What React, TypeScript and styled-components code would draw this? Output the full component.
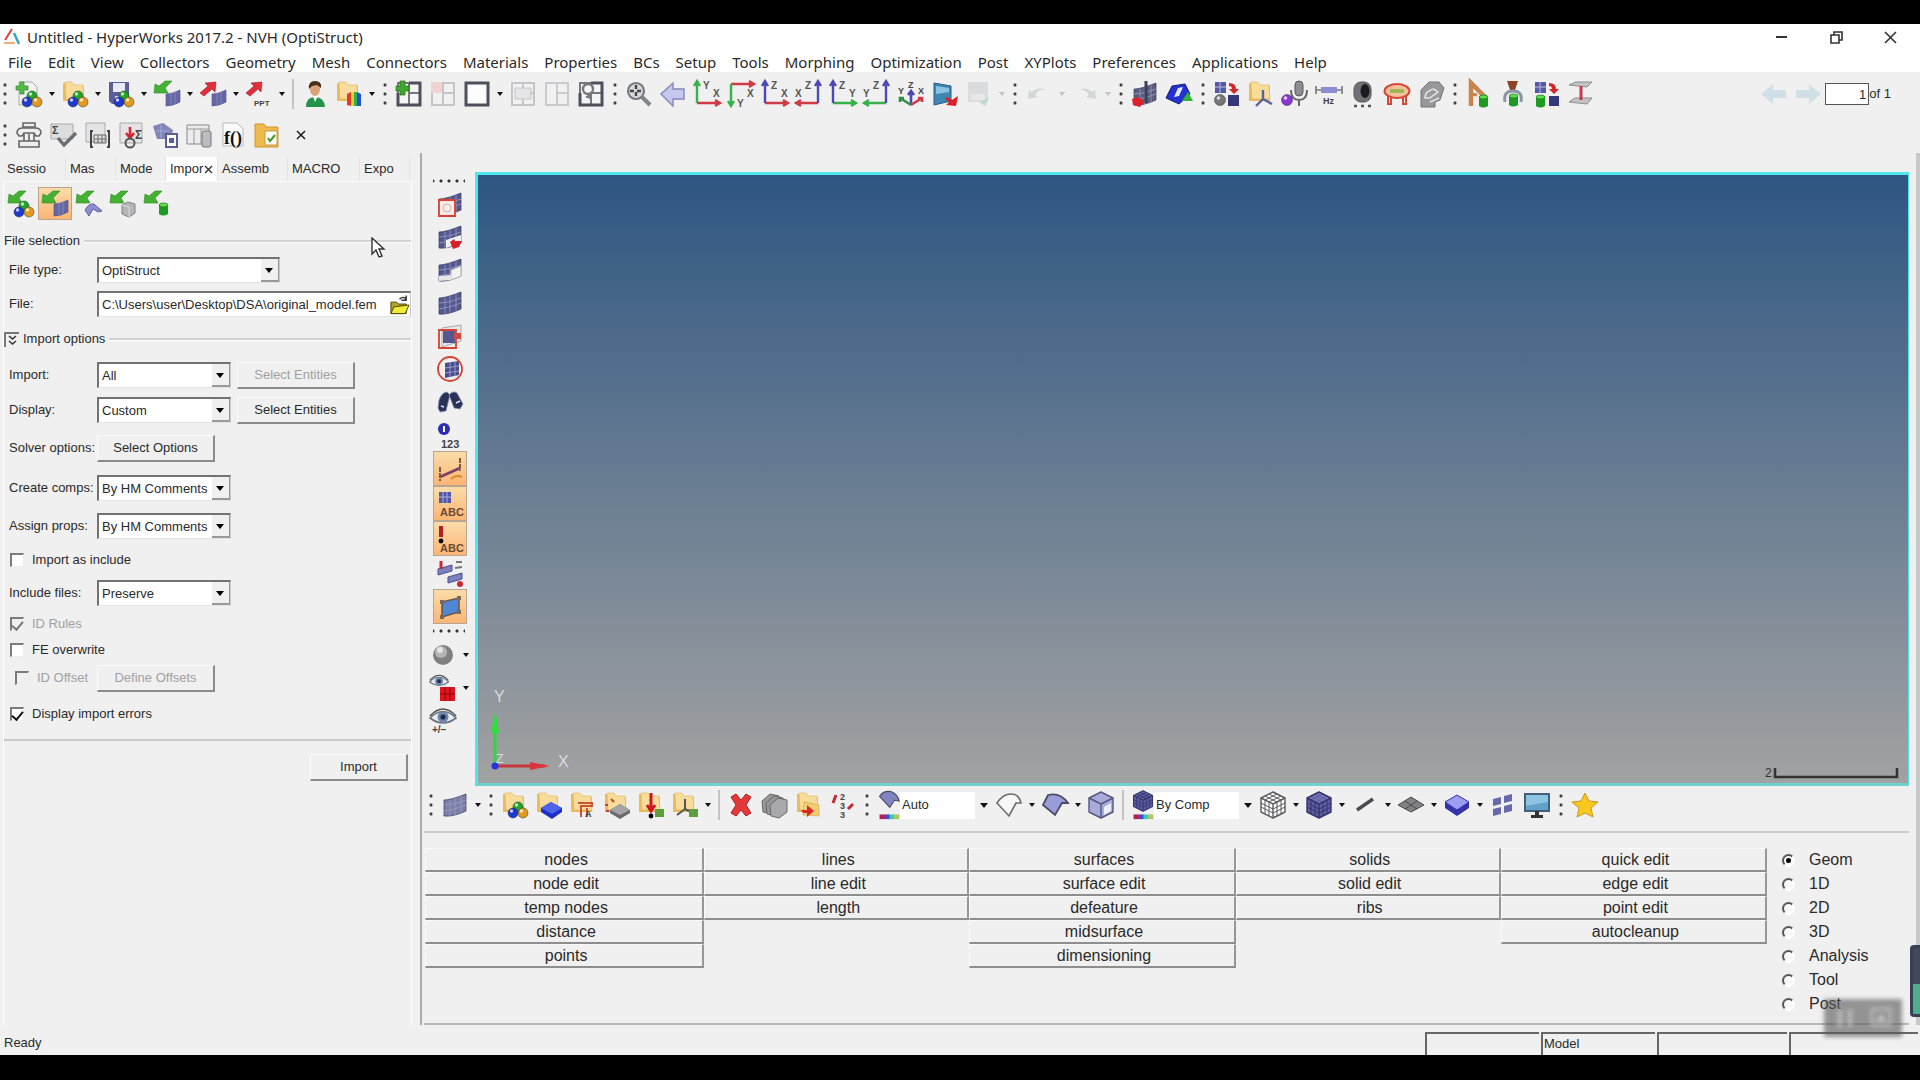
import React, { ReactNode } from "react";
import styled, { createGlobalStyle, css } from "styled-components";

const face = "#f0f0f0";
const sans = '"Liberation Sans", Arial, sans-serif';
const menuFont = '"Noto Sans", "Open Sans", sans-serif';

const GlobalStyle = createGlobalStyle`
  * { box-sizing: border-box; }
  body { margin: 0; background: #000; }
  button, input, select { font: inherit; color: inherit; margin: 0; padding: 0; border-radius: 0; }
`;

/* ---------- frame ---------- */

const Screen = styled.div`
  height: 100vh;
  min-height: 900px;
  padding: 24px 0 25px;
  background: #000;
  font: 13px/16px ${sans};
  color: #2a2a2a;
`;

const Window = styled.div`
  position: relative;
  display: flex;
  flex-direction: column;
  height: 100%;
  background: ${face};
  overflow: hidden;
`;

const TitleBar = styled.header`
  display: flex;
  align-items: center;
  gap: 6px;
  height: 26px;
  padding: 0 22px 0 3px;
  background: #fff;
  font: 15px/20px ${menuFont};
`;

const TitleText = styled.h1`
  flex: 1;
  margin: 0;
  font: inherit;
`;

const WindowButtons = styled.div`
  display: flex;
  gap: 38px;
`;

const PlainButton = styled.button<{ $width?: number }>`
  display: flex;
  align-items: center;
  justify-content: center;
  flex: none;
  width: ${(p) => p.$width ?? 16}px;
  height: 20px;
  border: 0;
  background: none;
`;

const MenuBar = styled.nav`
  display: flex;
  gap: 16px;
  height: 22px;
  padding: 0 8px;
  background: #fff;
  font: 15px/24px ${menuFont};
`;

const MenuLink = styled.a`
  color: #2a2a2a;
  text-decoration: none;
  white-space: nowrap;
`;

/* ---------- toolbars ---------- */

const Bar = styled.div<{ $height: number }>`
  display: flex;
  align-items: center;
  height: ${(p) => p.$height}px;
  flex: none;
`;

const TopBar = styled(Bar)`
  margin-left: -2px;
`;

const ViewBar = styled(Bar)`
  padding-bottom: 7px;
`;

const ToolBtn = styled.button<{ $active?: boolean }>`
  display: flex;
  align-items: center;
  justify-content: center;
  flex: none;
  width: 34px;
  height: 33px;
  border: 0;
  background: none;
  svg {
    overflow: visible;
  }
  ${(p) =>
    p.$active &&
    css`
      background: linear-gradient(#fadca9, #fcb575);
      border: 1px solid #b9a58f;
    `}
`;

const DropBtn = styled.button<{ $faint?: boolean }>`
  display: flex;
  align-items: center;
  justify-content: center;
  flex: none;
  width: 12px;
  height: 32px;
  border: 0;
  background: none;
  &::after {
    content: "";
    border: 3px solid transparent;
    border-top: 4px solid ${(p) => (p.$faint ? "#c4c4c4" : "#111")};
    border-bottom: 0;
  }
`;

const Grip = styled.span<{ $across?: boolean }>`
  flex: none;
  width: ${(p) => (p.$across ? 32 : 14)}px;
  height: ${(p) => (p.$across ? 14 : 30)}px;
  background-image: radial-gradient(circle at center, #333 0 1px, transparent 2px);
  background-size: ${(p) => (p.$across ? "8px 14px" : "14px 9px")};
  background-position: center;
  background-repeat: ${(p) => (p.$across ? "repeat-x" : "repeat-y")};
`;

const Divider = styled.span`
  flex: none;
  width: 10px;
  height: 30px;
  background: linear-gradient(#c4c4c4, #c4c4c4) center / 2px 100% no-repeat;
`;

const Pager = styled.form`
  display: flex;
  align-items: center;
  margin-left: auto;
  padding-right: 29px;
`;

const PageBox = styled.input`
  width: 44px;
  height: 22px;
  padding: 0 2px;
  border: 1px solid #555;
  background: #fff;
  text-align: right;
`;

/* ---------- body ---------- */

const Body = styled.div`
  display: flex;
  flex: 1;
  min-height: 0;
`;

const Side = styled.aside`
  display: flex;
  flex-direction: column;
  width: 424px;
  flex: none;
  padding: 4px 10px 0 3px;
  border-right: 2px solid ${face};
  box-shadow: inset -2px 0 0 #acacac;
`;

const Tabs = styled.div`
  display: flex;
  flex: none;
  height: 25px;
  border-bottom: 1px solid #fbfbfb;
`;

const Tab = styled.button<{ $width: number; $on?: boolean }>`
  display: flex;
  align-items: center;
  justify-content: space-between;
  width: ${(p) => p.$width}px;
  padding: 0 4px;
  border: 0;
  border-right: 1px solid #e4e4e4;
  background: ${(p) => (p.$on ? "#fff" : face)};
`;

const ImportTools = styled.div`
  display: flex;
  height: 47px;
  padding-top: 5px;
`;

const SideBody = styled.div`
  flex: 1;
  min-height: 0;
  border-left: 1px solid #fff;
  border-right: 1px solid #fff;
`;

const Legend = styled.h2<{ $height: number }>`
  display: flex;
  align-items: center;
  gap: 4px;
  height: ${(p) => p.$height}px;
  margin: 0;
  font: inherit;
  &::after {
    content: "";
    flex: 1;
    border-top: 2px solid #d2d2d2;
    border-bottom: 1px solid #fff;
  }
`;

const Row = styled.div<{ $height: number; $indent?: number }>`
  display: flex;
  align-items: center;
  height: ${(p) => p.$height}px;
  padding-left: ${(p) => p.$indent ?? 5}px;
`;

const FieldLabel = styled.label`
  width: 88px;
  flex: none;
  white-space: nowrap;
`;

const SelectShell = styled.span<{ $width: number }>`
  display: flex;
  align-items: stretch;
  width: ${(p) => p.$width}px;
  height: 26px;
  border: 2px solid #727272;
  border-right: 1px solid #c8c8c8;
  border-bottom: 1px solid #e4e4e4;
  background: #fff;
  select {
    flex: 1;
    min-width: 0;
    appearance: none;
    border: 0;
    padding-left: 3px;
    background: none;
    margin-right: -17px;
  }
  &::after {
    content: "";
    width: 17px;
    pointer-events: none;
    border-right: 1px solid #999;
    border-bottom: 2px solid #999;
    background: ${face};
  }
`;

const SelectArrow = styled.span`
  align-self: center;
  width: 0;
  margin-left: 4px;
  margin-right: -12px;
  z-index: 1;
  pointer-events: none;
  border: 4px solid transparent;
  border-top: 5px solid #000;
  border-bottom: 0;
`;

const PathShell = styled.span`
  display: flex;
  align-items: center;
  flex: 1;
  height: 26px;
  border: 2px solid #727272;
  border-right: 1px solid #c8c8c8;
  border-bottom: 1px solid #e4e4e4;
  background: #fff;
  input {
    flex: 1;
    min-width: 0;
    border: 0;
    padding-left: 3px;
    background: none;
  }
`;

const PushButton = styled.button<{ $width?: number; $gap?: number }>`
  width: ${(p) => p.$width ?? 118}px;
  height: 27px;
  margin-left: ${(p) => p.$gap ?? 0}px;
  border: 1px solid #fbfbfb;
  border-right: 2px solid #8a8a8a;
  border-bottom: 2px solid #8a8a8a;
  background: ${face};
  &:disabled {
    color: #a0a0a0;
  }
`;

const CheckLabel = styled.label<{ $off?: boolean }>`
  display: flex;
  align-items: center;
  gap: 8px;
  padding-left: 1px;
  color: ${(p) => (p.$off ? "#a0a0a0" : "inherit")};
  input {
    appearance: none;
    display: flex;
    justify-content: center;
    width: 14px;
    height: 14px;
    border: 2px solid #7c7c7c;
    border-right: 1px solid #eee;
    border-bottom: 1px solid #eee;
    background: #fff;
  }
  input:disabled {
    background: ${face};
  }
  input:checked::after {
    content: "";
    width: 5px;
    height: 9px;
    border: solid #111;
    border-width: 0 2px 2px 0;
    transform: rotate(40deg);
  }
  input:checked:disabled::after {
    border-color: #777;
  }
`;

const Foot = styled.div`
  display: flex;
  justify-content: flex-end;
  margin-top: 4px;
  padding: 13px 3px 0;
  border-top: 2px solid #cacaca;
`;

const Fold = styled.button`
  display: flex;
  align-items: center;
  justify-content: center;
  width: 15px;
  height: 15px;
  border: 0;
  border-top: 2px solid #777;
  border-left: 2px solid #777;
  background: ${face};
`;

/* ---------- work area ---------- */

const Main = styled.main`
  display: flex;
  flex-direction: column;
  flex: 1;
  min-width: 0;
  padding-right: 11px;
  box-shadow: inset -4px 0 0 #c9c9c9;
`;

const Stage = styled.div`
  display: flex;
  flex: 1;
  min-height: 0;
  padding-top: 19px;
`;

const SideTools = styled.div`
  display: flex;
  flex-direction: column;
  width: 51px;
  flex: none;
  padding: 2px 0 0 9px;
`;

const ToolStack = styled.div`
  display: flex;
  flex-direction: column;
  height: 436px;
  ${ToolBtn} {
    flex: 1;
    min-height: 0;
  }
`;

const ToolPair = styled.div`
  display: flex;
  align-items: center;
  margin-left: -7px;
`;

const Canvas = styled.section`
  position: relative;
  flex: 1;
  min-width: 0;
  border: 3px solid #4fe6ee;
  border-right-width: 1px;
  border-bottom-color: #6fd2cf;
  background: linear-gradient(#2e5682, #a2a2a2);
`;

const AxisMark = styled.svg`
  position: absolute;
  left: 9px;
  bottom: 6px;
`;

const ScaleMark = styled.svg`
  position: absolute;
  right: 6px;
  bottom: 0;
`;

const Combo = styled.span<{ $width: number }>`
  display: flex;
  align-items: center;
  width: ${(p) => p.$width}px;
  height: 30px;
  margin-left: 4px;
  svg {
    flex: none;
  }
  select {
    flex: 1;
    min-width: 0;
    height: 27px;
    appearance: none;
    border: 0;
    padding-left: 2px;
    background: #fff;
  }
  &::after {
    content: "";
    margin: 0 4px 0 5px;
    border: 4px solid transparent;
    border-top: 5px solid #111;
    border-bottom: 0;
  }
`;

const Panel = styled.div`
  display: flex;
  height: 194px;
  flex: none;
  padding: 15px 0 0 1px;
  border-top: 2px solid #cdcdcd;
  border-bottom: 2px solid #b8b8b8;
  font-size: 16px;
`;

const Commands = styled.div`
  display: grid;
  flex: 1;
  grid-template-columns: 279fr 265fr 266fr 265fr 266fr;
  align-items: start;
`;

const CommandColumn = styled.div`
  display: flex;
  flex-direction: column;
`;

const Command = styled.button`
  height: 24px;
  padding-left: 4px;
  border: 1px solid #fafafa;
  border-right: 2px solid #979797;
  border-bottom: 2px solid #8e8e8e;
  background: ${face};
  line-height: 20px;
`;

const Pages = styled.fieldset`
  width: 142px;
  margin: 0;
  padding: 0 0 0 15px;
  border: 0;
`;

const PageOption = styled.label`
  display: flex;
  align-items: center;
  gap: 14px;
  height: 24px;
  input {
    appearance: none;
    display: flex;
    align-items: center;
    justify-content: center;
    width: 13px;
    height: 13px;
    border: 2px solid #fff;
    border-top-color: #555;
    border-left-color: #555;
    border-radius: 50%;
    background: #f8f8f8;
  }
  input:checked::after {
    content: "";
    width: 5px;
    height: 5px;
    border-radius: 50%;
    background: #000;
  }
`;

const StatusBar = styled.footer`
  display: flex;
  align-items: flex-end;
  height: 30px;
  flex: none;
  padding-left: 4px;
`;

const StatusText = styled.span`
  flex: 1;
  line-height: 24px;
`;

const StatusCell = styled.span<{ $width: number }>`
  width: ${(p) => p.$width}px;
  height: 23px;
  margin-right: 2px;
  border-top: 2px solid #666;
  border-left: 2px solid #666;
  padding-left: 1px;
  line-height: 20px;
`;

/* ---------- things floating above the window ---------- */

const Pointer = styled.svg`
  position: absolute;
  left: 371px;
  top: 213px;
`;

const Recorder = styled.div`
  position: absolute;
  right: 18px;
  bottom: 18px;
  width: 78px;
  height: 38px;
  background: rgba(90, 90, 90, 0.62);
  filter: blur(2px);
  display: flex;
  align-items: center;
  justify-content: space-around;
`;

const EdgeWidget = styled.div`
  position: absolute;
  right: 0;
  bottom: 38px;
  width: 10px;
  height: 72px;
  border: 3px solid #3a3f58;
  border-right: 0;
  border-radius: 4px 0 0 4px;
  background: linear-gradient(#44485c 54%, #4fae8c 54%);
`;

/* ---------- drawings ---------- */

const Ball = ({ x, y, c, r = 5 }: { x: number; y: number; c: string; r?: number }) => (
  <g>
    <circle cx={x} cy={y} r={r} fill={c} stroke="#222" strokeOpacity=".45" />
    <circle cx={x - 1.5} cy={y - 2} r={r / 3} fill="#fff" opacity=".75" />
  </g>
);
const Balls = ({ y = 0, x = 0 }: { x?: number; y?: number }) => (
  <g transform={`translate(${x} ${y})`}>
    <Ball x={17} y={16} c="#23a52b" />
    <Ball x={12} y={22} c="#1c39d2" />
    <Ball x={22} y={22} c="#e09a1c" />
  </g>
);
const Folder = () => (
  <g>
    <path d="M2 3h8l2 3h11v15H2z" fill="#ecbb5c" />
    <path d="M4 2h7l2 3h9l1 14H5z" fill="#f8dc9a" stroke="#deb35a" strokeWidth=".6" />
  </g>
);
const Sheet = () => <path d="M4 2h13l5 5v18H4z" fill="#f2f2f2" stroke="#aaa" />;
const GreenArrow = () => <path d="M12 1 19 1 12 8 15 13 1 13 2 4 6 6z" fill="#45b132" stroke="#2b8a1e" strokeWidth=".6" />;
const RedArrow = () => <path d="M17 2 16 12 13 9 5 16 1 13 9 6 6 3z" fill="#df2f3b" stroke="#9c1a25" strokeWidth=".6" />;
const SmallMesh = ({ c = "#6467a3" }: { c?: string }) => (
  <g>
    <path d="M13 14Q19 14 27 10V22Q20 26 13 26z" fill={c} stroke="#4c4f88" strokeWidth=".6" />
    <path d="M18 13v12M22 12v12" stroke="#9a9cc8" strokeWidth=".6" />
  </g>
);
const Mesh = ({ c = "#55588f" }: { c?: string }) => (
  <g>
    <path d="M3 9Q10 9 25 3V20Q12 26 3 25z" fill={c} stroke="#33355e" strokeWidth=".7" />
    <path d="M9 9v16M14 7v17M20 5v17M3 14Q13 14 25 9M3 20Q13 19 25 14" stroke="#9a9cc8" strokeWidth=".8" fill="none" />
  </g>
);
const Cube = ({ c, line, dense }: { c: string; line: string; dense?: boolean }) => (
  <g stroke={line} fill="none" strokeLinejoin="round">
    <path d="M14 1 26 7V21L14 27 2 21V7z" fill={c} strokeWidth="1.4" />
    <path d="M2 7 14 13 26 7M14 13V27" strokeWidth="1.4" />
    {dense && <path d="M6 9V23M10 11V25M18 11V25M22 9V23M2 12 14 18 26 12M2 16 14 22 26 16M6 5 18 11M10 3 22 9M10 11 22 5M6 9 18 3" />}
  </g>
);
const Txt = ({ x, y, s = 9, c = "#444", children }: { x: number; y: number; s?: number; c?: string; children: ReactNode }) => (
  <text x={x} y={y} fontSize={s} fontFamily="Liberation Sans" fontWeight="bold" fill={c}>
    {children}
  </text>
);
const Axes = ({ h, v, hl, vl, flip, down }: { h: string; v: string; hl: string; vl: string; flip?: boolean; down?: boolean }) => {
  const x = flip ? 23 : 4;
  const far = flip ? 1 : 27;
  const y = down ? 4 : 23;
  const end = down ? 26 : 1;
  const dx = flip ? 5 : -5;
  const dy = down ? -5 : 5;
  return (
    <g fill="none" strokeWidth="2.4">
      <path d={`M${x} ${y}H${far}M${far + dx} ${y - 3}L${far} ${y}L${far + dx} ${y + 3}`} stroke={h} />
      <path d={`M${x} ${y}V${end}M${x - 3} ${end + dy}L${x} ${end}L${x + 3} ${end + dy}`} stroke={v} />
      <Txt x={flip ? 0 : 20} y={17} s={10} c="#555"><tspan stroke="none">{hl}</tspan></Txt>
      <Txt x={10} y={down ? 27 : 9} s={10} c="#555"><tspan stroke="none">{vl}</tspan></Txt>
    </g>
  );
};
const Eye = () => (
  <g>
    <path d="M1 11Q14-2 27 11 14 21 1 11z" fill="#e8edf3" stroke="#6a7280" strokeWidth="1.6" />
    <circle cx="14" cy="10" r="5.5" fill="#6d86a8" />
    <circle cx="14" cy="10" r="2.6" fill="#1f2a4c" />
    <path d="M1 9Q14-5 27 9" fill="none" stroke="#555" strokeWidth="1.6" />
  </g>
);
const GreenCan = ({ x = 0, y = 0 }: { x?: number; y?: number }) => (
  <g transform={`translate(${x} ${y})`}>
    <path d="M14 15v9q4 3 9 0v-9z" fill="#1e9a22" />
    <ellipse cx="18.500" cy="15" rx="4.500" ry="2" fill="#5be04c" stroke="#137017" strokeWidth=".7" />
  </g>
);
const Slab = ({ c, d }: { c: string; d: string }) => (
  <g>
    <path d="M2 11v6l12 8 12-8v-6z" fill={d} />
    <path d="M14 4 26 11 14 19 2 11z" fill={c} stroke={d} />
  </g>
);
const Window3 = ({ c = "#4e4e5c", bg = "#fdfdfd" }: { c?: string; bg?: string }) => (
  <path d="M3 3h22v22H3z" fill={bg} stroke={c} strokeWidth="3" />
);
const Panes = ({ o = 1 }: { o?: number }) => (
  <g opacity={o}>
    <path d="M3 3h22v22H3z" fill="#f4f4f4" stroke="#77777f" strokeWidth="2" />
    <path d="M14 3v22M14 13h11" stroke="#77777f" strokeWidth="2" />
  </g>
);

const art: Record<string, ReactNode> = {
  newModel: <><Sheet /><path d="M1 6h4V2h4v4h4v4H9v4H5v-4H1z" fill="#57b947" stroke="#2f8b26" strokeWidth=".7" /><Balls /></>,
  openModel: <><Folder /><Balls /></>,
  saveModel: <><path d="M2 2h20v22H5l-3-3z" fill="#5a5f99" /><path d="M6 3h12v9H6z" fill="#e8eaf4" /><path d="M8 16h8v8H8z" fill="#cfd2e6" /><Balls /></>,
  importSolver: <><GreenArrow /><SmallMesh /></>,
  exportSolver: <><RedArrow /><SmallMesh /></>,
  exportPpt: <><RedArrow /><Txt x={9} y={26} s={8}>PPT</Txt></>,
  user: <><path d="M5 27q0-10 9-10t10 10z" fill="#23934a" /><path d="M12 16l2 6 3-6z" fill="#fff" /><ellipse cx="14" cy="9" rx="5" ry="7" fill="#dba27a" /><path d="M8 9Q7 1 14 1t6 7l-4-3-5 1z" fill="#4b2c1c" /></>,
  colorFolder: <><Folder /><path d="M12 14 16 12V26l-4-1z" fill="#e23b2e" /><path d="M16 12h3v14h-3z" fill="#f3d32d" /><path d="M19 12h3v14h-3z" fill="#2fb04b" /><path d="M22 12 26 14V26h-4z" fill="#2450d8" /></>,
  addPage: <><Panes /><path d="M3 13V25H25V3H14" fill="none" stroke="#4e4e5c" strokeWidth="3" /><path d="M1 6h4V1h5v5h4v5h-4v4H5v-4H1z" fill="#3fa62f" stroke="#256f1b" strokeWidth=".7" /></>,
  dropPage: <g opacity=".35"><Panes /><path d="M2 2h11v11H2z" fill="#f0a0a0" /></g>,
  onePage: <Window3 />,
  pageA: <g opacity=".35"><Panes /><path d="M6 8h16v11H6z" fill="#cfd3dd" stroke="#777" /></g>,
  pageB: <Panes o={0.3} />,
  swapPage: <><Panes /><path d="M3 13V25H25V3H14" fill="none" stroke="#4e4e5c" strokeWidth="3" /><circle cx="11" cy="9" r="5" fill="#f4f4f4" stroke="#777" strokeWidth="2.400" /><path d="m8 17 5-3v5z" fill="#777" /></>,
  fit: <><circle cx="11" cy="11" r="8" fill="#d7d8de" stroke="#77777f" strokeWidth="2.200" /><path d="M11 5v12M5 11h12" stroke="#444" strokeWidth="2.400" strokeDasharray="4 3" /><path d="m17 17 8 8" stroke="#84848c" strokeWidth="4" /></>,
  back: <path d="M2 14 14 3v6h11v10H14v7z" fill="#c5c7ef" stroke="#8587bb" strokeWidth="1.400" />,
  xy: <Axes h="#cf3a46" v="#37b24a" hl="X" vl="Y" />,
  yx: <Axes h="#cf3a46" v="#37b24a" hl="X" vl="Y" down />,
  xz: <Axes h="#cf3a46" v="#4c48b4" hl="X" vl="Z" />,
  zx: <Axes h="#cf3a46" v="#4c48b4" hl="X" vl="Z" flip />,
  yz: <Axes h="#37b24a" v="#4c48b4" hl="Y" vl="Z" />,
  zy: <Axes h="#37b24a" v="#4c48b4" hl="Y" vl="Z" flip />,
  iso: <g fill="none" strokeWidth="2.600"><path d="M14 24V11M11 15l3-4 3 4" stroke="#4c48b4" /><path d="m14 25 11-7M25 22v-4h-4" stroke="#cf3a46" /><path d="M14 25 3 18M3 22v-4h4" stroke="#2b8f4a" /><g stroke="none"><Txt x={11} y={8}>Z</Txt><Txt x={1} y={14}>Y</Txt><Txt x={21} y={14}>X</Txt></g></g>,
  saveView: <><path d="M3 3 20 6V21L3 25z" fill="#3e87b5" stroke="#285d86" /><path d="M5 6 18 8v4L5 14z" fill="#8cc3e0" /><path d="m27 16-2 10-10-1 3-3-4-3 2-2 5 3z" fill="#dc2029" /></>,
  restoreView: <g opacity=".4"><path d="M3 2h20v20H3z" fill="#bcbfc4" /><path d="M6 14h14v6H6z" fill="#ddd" /><path d="m24 18-4 8-6-4z" fill="#7dbb91" /></g>,
  undo: <path d="M3 19 4 10l3 2q6-6 14-2-8-1-11 5l3 2z" fill="#d3d5d8" />,
  redo: <path d="m25 19-1-9-3 2q-6-6-14-2 8-1 11 5l-3 2z" fill="#d3d5d8" />,
  meshRed: <><Mesh c="#5c5f7c" /><path d="M15 1v22" stroke="#3c3e58" strokeWidth="3" /><path d="M1 19l7-2 5 5-4 5-7-2z" fill="#df2029" /></>,
  prism: <><path d="M1 18 7 6 20 4 25 14 14 24z" fill="#2430cf" stroke="#141c80" /><path d="M9 17 13 8l5-1-4 9z" fill="#dfe8ff" /><path d="M17 21l6-9 5 9z" fill="#2fb33b" /></>,
  solverA: <><path d="M2 2h11v11H2z" fill="#565aa6" /><path d="M2 7h11M7 2v11" stroke="#b9bbe0" /><path d="M16 3q7 0 7 6h3l-5 5-5-5h3q0-3-3-3z" fill="#d8232c" /><Ball x={7} y={20} c="#777" r={5.5} /><path d="M15 15h11v11H15z" fill="#35377a" /></>,
  folderY: <><Folder /><path d="M16 10v9l-7 7M16 19l9 5" fill="none" stroke="#5b6199" strokeWidth="2.400" /></>,
  mic: <><rect x="14" y="1" width="8" height="15" rx="4" fill="#8d8d94" stroke="#555" /><path d="M10 10q0 10 8 10t8-10M18 20v6" fill="none" stroke="#666" strokeWidth="2" /><Ball x={6} y={20} c="#8a35d4" r={5.5} /></>,
  hz: <><path d="M1 6v8M27 6v8M1 10h26" stroke="#777" strokeWidth="1.600" /><path d="M6 7h16v6H6z" fill="#8a8ed2" /><Txt x={8} y={24}>Hz</Txt></>,
  shaker: <><rect x="5" y="2" width="17" height="20" rx="7" fill="#707076" stroke="#555" /><ellipse cx="16" cy="11" rx="4.500" ry="7" fill="#1c1c20" /><path d="M5 26h3m4 0h3m4 0h3" stroke="#555" strokeWidth="2.400" /></>,
  table: <><ellipse cx="14" cy="11" rx="12.500" ry="7" fill="#f5c19b" stroke="#d6473a" strokeWidth="2" /><path d="M7 11h14" stroke="#9ab553" strokeWidth="3.600" /><path d="M5 16v8h3v-6M23 16v8h-3v-6" fill="none" stroke="#d6473a" strokeWidth="2" /></>,
  head: <><path d="M4 10 12 2h10l5 6-4 12-5 2v5H4z" fill="#98989b" stroke="#757578" /><path d="M8 18q0-7 9-9l4 3-8 6zM13 22l9-4" fill="none" stroke="#e2e2e4" strokeWidth="1.600" /></>,
  frameA: <><path d="M6 26V3l15 15" fill="none" stroke="#c9844e" strokeWidth="4.500" /><path d="M6 14l6 1" stroke="#c9844e" strokeWidth="3" /><GreenCan y={2} /></>,
  frameB: <><path d="M8 1h11l-3 9h-5z" fill="#8c4429" /><path d="M6 22q-2-11 8-11t8 11" fill="none" stroke="#8b93a8" strokeWidth="3" /><GreenCan x={-4} y={1} /></>,
  frameC: <><path d="M2 2h11v11H2z" fill="#565aa6" /><path d="M2 7h11M7 2v11" stroke="#b9bbe0" /><path d="M16 3q7 0 7 6h3l-5 5-5-5h3q0-3-3-3z" fill="#d8232c" /><GreenCan x={-11} y={2} /><path d="M16 16h10v10H16z" fill="#35377a" /></>,
  beam: <><path d="M2 5 9 2h16l-5 5zM2 22l6-4h17l-5 6z" fill="#c3c3c6" stroke="#8d8d90" /><path d="M14 6v14" stroke="#c9394a" strokeWidth="3" /></>,
  prev: <path d="M1 14 13 4v6h13v8H13v6z" fill="#cfe0e8" />,
  next: <path d="M27 14 15 4v6H2v8h13v6z" fill="#cfe0e8" />,

  phone: <g fill="#eee" stroke="#666" strokeWidth="1.600"><path d="M8 2h12v4H8z" /><path d="M2 12q0-5 6-5h12q6 0 6 5l-2 3h-3l-2-3H9l-2 3H4z" /><path d="M9 13v8M14 13v8M19 13v8" /><path d="M4 20h20v6H4z" /></g>,
  sigmaCheck: <><path d="M2 3h22v15H2z" fill="#ddd" stroke="#aaa" /><Txt x={3} y={13} s={11}>Σ</Txt><path d="m9 17 6 7L27 12" fill="none" stroke="#6d6d75" strokeWidth="3.400" /></>,
  matrix: <><path d="M3 2h19v19H3z" fill="#e4e4e6" stroke="#aaa" /><path d="M10 10H8v16h2M24 10h2v16h-2" fill="none" stroke="#444" strokeWidth="2" /><path d="M11 14h12v8H11zM15 14v8M19 14v8M11 18h12" stroke="#666" fill="none" /></>,
  loadSum: <><path d="M3 2h22v20H3z" fill="#e4e4e6" stroke="#aaa" /><path d="M13 6v9M9 12l4 5 4-5" stroke="#d42531" strokeWidth="2.600" fill="none" /><Txt x={18} y={18} s={12}>Σ</Txt><circle cx="13" cy="22" r="4.500" fill="none" stroke="#555" strokeWidth="2" /></>,
  elements: <><path d="M2 5 12 2l10 7-2 9H6z" fill="#8185b9" /><path d="M5 10h13M10 4v13" stroke="#a5a8d4" /><path d="M15 13h11v13H15z" fill="#fff" stroke="#5a5e97" strokeWidth="2" /><path d="M18 17h5v5h-5z" fill="#5a5e97" /></>,
  tables: <><path d="M2 4h22v19H2z" fill="#ececee" stroke="#888" /><path d="M2 8h22M9 8v15M16 8v15" stroke="#999" /><rect x="17" y="10" width="9" height="16" rx="2" fill="#bcbcc2" stroke="#777" /></>,
  fn: <><path d="M4 2h14l6 6v17H4z" fill="#fafafa" stroke="#bbb" /><text x="5" y="23" fontSize="18" fontFamily="Liberation Serif" fontWeight="bold" fill="#111">f()</text></>,
  noteFolder: <><path d="M2 3h9l2 3h12v20H2z" fill="#f0b94c" stroke="#cf962c" /><path d="M12 10h12v14H12z" fill="#fffdf4" stroke="#c29a4a" /><path d="m15 17 2 3 5-6" fill="none" stroke="#44962e" strokeWidth="2" /></>,

  inModel: <><GreenArrow /><Balls /></>,
  inGeom: <><GreenArrow /><path d="M10 20q4-7 9-6l8 7-4 1-5-3-4 7z" fill="#8a8ed0" stroke="#5e62a0" /></>,
  inCad: <><GreenArrow /><path d="m13 15 6-3 7 2v9l-6 4-7-3z" fill="#b5b5b8" stroke="#808083" /><path d="m13 15 7 2v10" fill="none" stroke="#ddd" /></>,
  inCan: <><GreenArrow /><GreenCan x={2} /></>,

  maskA: <><Mesh /><path d="M3 10h16v16H3z" fill="#fbeae6" stroke="#d8432f" strokeWidth="1.800" /><circle cx="11" cy="18" r="4" fill="none" stroke="#bbb" /></>,
  maskB: <><Mesh /><path d="M10 17 25 12v8l-15 5z" fill="#f2f2f2" /><path d="M14 19l4-3 1 2 7 0-3 6-6 2z" fill="#d8202b" /></>,
  maskC: <><Mesh /><path d="M15 14 25 10v10l-10 4z" fill="#f2f2f2" stroke="#bbb" /><path d="M3 20v5l12-1v-5z" fill="#e8e8e8" /></>,
  maskD: <Mesh />,
  maskE: <><path d="M6 6 25 3v16L6 25z" fill="#e6e6ea" stroke="#aaa" /><path d="M7 9h12v12H7z" fill="#55588f" /><path d="M3 8h17v18H3z" fill="none" stroke="#d8432f" strokeWidth="1.800" /><path d="M18 11h7v6h-7z" fill="#cc4a48" /></>,
  maskF: <><path d="M9 8 23 6v14L9 23z" fill="#4a4d8c" /><path d="M14 7v15M19 6v15M9 13l14-2M9 18l14-2" stroke="#9b9dcc" /><circle cx="14" cy="14" r="12" fill="none" stroke="#d8432f" strokeWidth="1.800" /></>,
  find: <g stroke="#8b90bd" strokeWidth=".8"><path d="M3 12Q6 4 11 4l3 3-4 16-6 1-2-4z" fill="#2c3158" /><path d="M13 7q4-5 8-2l6 11-3 5-6-1z" fill="#2c3158" /><path d="M5 18l3 1M20 15l4-2" stroke="#dfe2f5" strokeWidth="1.600" /></g>,
  numbers: <><circle cx="8" cy="8" r="6" fill="#2a2cb4" /><path d="M8 5v6" stroke="#fff" strokeWidth="2" /><Txt x={5} y={27} s={11}>123</Txt></>,
  ruler1: <><path d="M4 22 24 13" stroke="#7a3f63" strokeWidth="2.800" /><path d="M4 12v14M24 3v13" stroke="#7c5a42" strokeWidth="2" strokeDasharray="5 1" /><path d="M15 24q5-5 11-2" stroke="#d98d2c" strokeWidth="2.400" fill="none" /></>,
  abcMesh: <><path d="M3 2h12v11H3z" fill="#5256a6" /><path d="M7 2v11M11 2v11M3 7h12" stroke="#a9acd8" /><Txt x={4} y={26} s={11} c="#6b4a33">ABC</Txt></>,
  abcLoad: <><path d="M5 1v11" stroke="#b51d24" strokeWidth="4" /><circle cx="5" cy="16" r="2.400" /><Txt x={4} y={27} s={11} c="#6b4a33">ABC</Txt></>,
  split: <><path d="m2 10 14-4v6L2 16zM12 18l14-4v6l-14 4z" fill="#7c80be" stroke="#4c5090" /><path d="M5 2v8" stroke="#c62a35" strokeWidth="3" /><circle cx="24" cy="25" r="3" fill="#c62a35" /><path d="M20 3h6M19 9l7-1" stroke="#777" strokeWidth="2" /></>,
  shell: <><path d="m6 9 17-4v14L6 24z" fill="#4f87d6" stroke="#6b5a48" strokeWidth="1.600" /><path d="M4 9h4M21 5h4M4 24h4M21 19h4" stroke="#7a6a55" strokeWidth="4" /></>,
  sphere: <><circle cx="14" cy="14" r="10" fill="#808080" /><circle cx="12" cy="11" r="6" fill="#b4b4b4" /><circle cx="11" cy="9" r="3" fill="#e6e6e6" /></>,
  eyeRed: <><g transform="scale(.72)"><Eye /></g><path d="M11 13h15v14H11z" fill="#e1141d" /><path d="M16 13v14M21 13v14M11 20h15" stroke="#8c0b12" /></>,
  eyePm: <><Eye /><Txt x={3} y={26} s={10}>+/–</Txt></>,

  meshFlat: <Mesh c="#7d80a6" />,
  fModel: <><Folder /><Balls /></>,
  fBlue: <><Folder /><path d="m6 17 10-6 11 6v4l-10 7-11-7z" fill="#1d2fc9" /><path d="m6 17 10-6 11 6-10 6z" fill="#4d63ea" /></>,
  fCard: <><Folder /><path d="M9 12h14v3H12v11M18 17v9" stroke="#c7543b" strokeWidth="2" fill="none" /><Txt x={16} y={26}>A</Txt></>,
  fGear: <><Folder /><path d="m7 19 10-6 10 6v3l-10 6-10-6z" fill="#6a6a6d" /><path d="m7 19 10-6 10 6-10 5z" fill="#a5a5a8" /><path d="M2 14h3M3 20h3M8 8l3 3" stroke="#c4402f" strokeWidth="2" /></>,
  fLoad: <><Folder /><path d="M14 2v16M10 14l4 6 4-6" stroke="#cc1822" strokeWidth="3" fill="none" /><circle cx="14" cy="25" r="2.400" /><path d="M18 18h9v8h-9z" fill="#5ba03c" /></>,
  fAxes: <><Folder /><path d="M14 8v10l-8 6M14 18l8 4" stroke="#555" strokeWidth="2" fill="none" /><path d="M18 18h9v8h-9z" fill="#5ba03c" /></>,
  erase: <path d="m4 6 5-3 5 6 5-6 5 3-5 8 5 8-5 3-5-6-5 6-5-3 5-8z" fill="#e13a38" stroke="#b41f22" />,
  cards: <g fill="#98989b" stroke="#68686b"><path d="m1 10 8-7 9 2v12l-8 6-8-2z" /><path d="m5 12 8-7 9 2v12l-8 6-8-2z" /><path d="m9 14 8-7 9 2v12l-8 6-8-2z" fill="#a9a9ac" /></g>,
  moveTo: <><Folder /><path d="m9 11 15 3v11L8 24z" fill="#f3cf74" stroke="#cf9c35" strokeWidth=".6" /><path d="M6 19h6v-5l7 6-7 6v-4H8z" fill="#d8282c" /></>,
  renumber: <><Txt x={11} y={9}>2</Txt><Txt x={11} y={18}>3</Txt><Txt x={11} y={27}>3</Txt><path d="M7 4 4 12M24 13l-5 5" stroke="#c62a35" strokeWidth="3" /></>,
  shellWhite: <path d="M2 12Q8 3 16 3t10 9l-5 0-7 13z" fill="#f7f7f7" stroke="#6c6c70" strokeWidth="1.600" />,
  shellBlue: <path d="M2 14 7 4q12-3 20 8l-6 0-7 12z" fill="#9a9ed8" stroke="#4a4c66" strokeWidth="1.800" />,
  cube: <><Cube c="#a9abdc" line="#55577c" /><path d="m17 16 7-4v8l-7 4z" fill="#eceefa" /></>,
  wireCube: <Cube c="#fdfdfd" line="#5b5b5f" dense />,
  meshCube: <><Cube c="#5c5fa6" line="#34366a" dense /><path d="M14 2 24 7 14 12 4 7z" fill="#8a8dcb" opacity=".5" /></>,
  line: <path d="M6 19 22 8" stroke="#4b4b4d" strokeWidth="3.400" />,
  plate: <><path d="M14 6 27 14 14 21 1 14z" fill="#828285" stroke="#4a4a4d" /><path d="m8 10 12 8M20 10 8 18" stroke="#4a4a4d" /></>,
  slab: <Slab c="#9a9df0" d="#3432a8" />,
  quads: <g fill="#6669ac"><path d="m4 8 8-2v7l-8 2zM15 5l8-2v7l-8 2zM4 18l8-2v7l-8 2zM15 15l8-2v7l-8 2z" /></g>,
  monitor: <><path d="M2 3h24v17H2z" fill="#5fa3cb" stroke="#43607a" strokeWidth="2" /><path d="M3 4h22v7L3 15z" fill="#8cc4e2" /><path d="M12 20h4v4h4v3H8v-3h4z" fill="#333" /></>,
  star: <path d="m14 2 4 8 9 1-7 6 2 9-8-4-8 4 2-9-7-6 9-1z" fill="#f8c81c" stroke="#c9981a" />,
  autoColor: <path d="M2 8Q7 0 17 2q8 3 10 12l-6-1-6 9z" fill="#8285c0" stroke="#4a4c66" strokeWidth="1.400" />,
  compColor: <Cube c="#5c5fa6" line="#34366a" dense />,
};

const Icon = ({ name, size = 28 }: { name: string; size?: number }) => (
  <svg width={size} height={size} viewBox="0 0 28 28" aria-hidden="true">
    {art[name]}
  </svg>
);

const ComboIcon = ({ name }: { name: string }) => (
  <svg width="22" height="30" viewBox="0 0 28 38" aria-hidden="true">
    {art[name]}
    <path d="M2 31h7v6H2z" fill="#b02058" />
    <path d="M9 31h6v6H9z" fill="#3b49d6" />
    <path d="M15 31h6v6h-6z" fill="#3fc6b0" />
    <path d="M21 31h6v6h-6z" fill="#a9c75a" />
  </svg>
);

/* "|" grip, "/" divider, trailing "+" adds a drop arrow, trailing "-" a faint one */
const Tools = ({ items, active }: { items: string[]; active?: string[] }) => (
  <>
    {items.map((item, i) => {
      if (item === "|") return <Grip key={i} />;
      if (item === "/") return <Divider key={i} />;
      const name = item.replace(/[+-]$/, "");
      return (
        <React.Fragment key={i}>
          <ToolBtn type="button" aria-label={name} $active={active?.includes(name)}>
            <Icon name={name} />
          </ToolBtn>
          {/[+-]$/.test(item) && <DropBtn type="button" aria-label={`${name} menu`} $faint={item.endsWith("-")} />}
        </React.Fragment>
      );
    })}
  </>
);

const Picker = ({ id, value, width }: { id: string; value: string; width: number }) => (
  <SelectShell $width={width}>
    <select id={id} defaultValue={value}>
      <option>{value}</option>
    </select>
    <SelectArrow />
  </SelectShell>
);

/* ---------- data ---------- */

const menus = ["File", "Edit", "View", "Collectors", "Geometry", "Mesh", "Connectors", "Materials", "Properties", "BCs", "Setup", "Tools", "Morphing", "Optimization", "Post", "XYPlots", "Preferences", "Applications", "Help"];

const mainTools = ["|", "newModel+", "openModel+", "saveModel+", "importSolver+", "exportSolver+", "exportPpt+", "/", "user", "colorFolder+", "|", "addPage", "dropPage", "onePage+", "pageA", "pageB", "swapPage", "|", "fit", "back", "xy", "yx", "xz", "zx", "yz", "zy", "iso", "saveView", "restoreView-", "|", "undo-", "redo-", "|", "meshRed", "prism", "|", "solverA", "folderY", "mic", "hz", "shaker", "table", "head", "|", "frameA", "frameB", "frameC", "beam"];

const checkTools = ["|", "phone", "sigmaCheck", "matrix", "loadSum", "elements", "tables", "fn", "noteFolder"];

const tabs: [string, number][] = [["Sessio", 63], ["Mas", 50], ["Mode", 50], ["Impor", 52], ["Assemb", 70], ["MACRO", 72], ["Expo", 50]];

const commands = [
  ["nodes", "node edit", "temp nodes", "distance", "points"],
  ["lines", "line edit", "length"],
  ["surfaces", "surface edit", "defeature", "midsurface", "dimensioning"],
  ["solids", "solid edit", "ribs"],
  ["quick edit", "edge edit", "point edit", "autocleanup"],
];

const pages = ["Geom", "1D", "2D", "3D", "Analysis", "Tool", "Post"];

/* ---------- sections ---------- */

const ImportPanel = () => (
  <Side>
    <Tabs role="tablist">
      {tabs.map(([name, width]) => (
        <Tab key={name} type="button" role="tab" $width={width} $on={name === "Impor"} aria-selected={name === "Impor"}>
          {name}
          {name === "Impor" && (
            <svg width="9" height="9" viewBox="0 0 9 9" aria-hidden="true">
              <path d="m1 1 7 7M8 1 1 8" stroke="#333" strokeWidth="1.4" />
            </svg>
          )}
        </Tab>
      ))}
    </Tabs>
    <SideBody>
      <ImportTools>
        <Tools items={["inModel", "importSolver", "inGeom", "inCad", "inCan"]} active={["importSolver"]} />
      </ImportTools>
      <Legend $height={24}>File selection</Legend>
      <Row $height={34}>
        <FieldLabel htmlFor="type">File type:</FieldLabel>
        <Picker id="type" value="OptiStruct" width={183} />
      </Row>
      <Row $height={34}>
        <FieldLabel htmlFor="file">File:</FieldLabel>
        <PathShell>
          <input id="file" defaultValue="C:\Users\user\Desktop\DSA\original_model.fem" />
          <PlainButton type="button" aria-label="Browse" $width={22}>
            <svg width="21" height="22" viewBox="0 0 22 22">
              <path d="M2 8h6l2 2h8v10H2z" fill="#b7a51e" stroke="#4b4410" />
              <path d="m5 13 16-2-4 9H2z" fill="#f3ea35" stroke="#4b4410" />
              <path d="M11 5q4-4 7 0M18 1v5h-5" fill="none" stroke="#333" strokeWidth="1.500" />
            </svg>
          </PlainButton>
        </PathShell>
      </Row>
      <Legend $height={36}>
        <Fold type="button" aria-label="Collapse">
          <svg width="9" height="11" viewBox="0 0 9 11">
            <path d="m1 1 3.500 3L8 1M1 6l3.500 3L8 6" fill="none" stroke="#333" strokeWidth="1.500" />
          </svg>
        </Fold>
        Import options
      </Legend>
      <Row $height={36}>
        <FieldLabel htmlFor="scope">Import:</FieldLabel>
        <Picker id="scope" value="All" width={134} />
        <PushButton type="button" $gap={6} disabled>Select Entities</PushButton>
      </Row>
      <Row $height={34}>
        <FieldLabel htmlFor="display">Display:</FieldLabel>
        <Picker id="display" value="Custom" width={134} />
        <PushButton type="button" $gap={6}>Select Entities</PushButton>
      </Row>
      <Row $height={42}>
        <FieldLabel htmlFor="solver">Solver options:</FieldLabel>
        <PushButton id="solver" type="button">Select Options</PushButton>
      </Row>
      <Row $height={38}>
        <FieldLabel htmlFor="comps">Create comps:</FieldLabel>
        <Picker id="comps" value="By HM Comments" width={134} />
      </Row>
      <Row $height={38}>
        <FieldLabel htmlFor="props">Assign props:</FieldLabel>
        <Picker id="props" value="By HM Comments" width={134} />
      </Row>
      <Row $height={30}>
        <CheckLabel><input type="checkbox" />Import as include</CheckLabel>
      </Row>
      <Row $height={36}>
        <FieldLabel htmlFor="includes">Include files:</FieldLabel>
        <Picker id="includes" value="Preserve" width={134} />
      </Row>
      <Row $height={26}>
        <CheckLabel $off><input type="checkbox" defaultChecked disabled />ID Rules</CheckLabel>
      </Row>
      <Row $height={26}>
        <CheckLabel><input type="checkbox" />FE overwrite</CheckLabel>
      </Row>
      <Row $height={30} $indent={10}>
        <CheckLabel $off><input type="checkbox" disabled />ID Offset</CheckLabel>
        <PushButton type="button" $gap={9} disabled>Define Offsets</PushButton>
      </Row>
      <Row $height={42}>
        <CheckLabel><input type="checkbox" defaultChecked />Display import errors</CheckLabel>
      </Row>
      <Foot>
        <PushButton type="button" $width={98}>Import</PushButton>
      </Foot>
    </SideBody>
  </Side>
);

const GraphicsArea = () => (
  <Stage>
    <SideTools>
      <Grip $across />
      <ToolStack>
        <Tools
          items={["maskA", "maskB", "maskC", "maskD", "maskE", "maskF", "find", "numbers", "ruler1", "abcMesh", "abcLoad", "split", "shell"]}
          active={["ruler1", "abcMesh", "abcLoad", "shell"]}
        />
      </ToolStack>
      <Grip $across />
      <ToolPair><Tools items={["sphere+"]} /></ToolPair>
      <ToolPair><Tools items={["eyeRed+"]} /></ToolPair>
      <ToolPair><Tools items={["eyePm"]} /></ToolPair>
    </SideTools>
    <Canvas aria-label="Graphics area">
      <AxisMark width="90" height="90" viewBox="0 0 90 90">
        <path d="M8 78V30" stroke="#2fd83c" strokeWidth="3" />
        <path d="M8 25 4 46h8z" fill="#2be03a" />
        <path d="M8 79h50" stroke="#c4383d" strokeWidth="3" />
        <path d="M63 79 43 75v8z" fill="#d8363b" />
        <circle cx="8" cy="79" r="3.500" fill="#2531e0" />
        <g fontFamily="Liberation Sans" fill="#dcdcdc">
          <text x="7" y="15" fontSize="16">Y</text>
          <text x="71" y="80" fontSize="16">X</text>
          <text x="9" y="76" fontSize="12">Z</text>
        </g>
      </AxisMark>
      <ScaleMark width="140" height="20" viewBox="0 0 140 20">
        <text x="3" y="14" fontSize="12" fontFamily="Liberation Sans" fill="#333">2</text>
        <path d="M13 5v9h122V5" fill="none" stroke="#333" strokeWidth="2.500" />
      </ScaleMark>
    </Canvas>
  </Stage>
);

const App = () => (
  <>
    <GlobalStyle />
    <Screen>
      <Window>
        <TitleBar>
          <svg width="18" height="18" viewBox="0 0 18 18" aria-hidden="true">
            <path d="M9 1 2 12" stroke="#d8433c" strokeWidth="2" />
            <path d="M1 15h11" stroke="#e8b080" strokeWidth="2" />
            <path d="m11 5 5 11" stroke="#2ba7b8" strokeWidth="2.400" />
          </svg>
          <TitleText>Untitled - HyperWorks 2017.2 - NVH (OptiStruct)</TitleText>
          <WindowButtons>
            <PlainButton type="button" aria-label="Minimize">
              <svg width="12" height="12"><path d="M0 6h11" stroke="#333" strokeWidth="2" /></svg>
            </PlainButton>
            <PlainButton type="button" aria-label="Restore">
              <svg width="13" height="13"><path d="M1 4h8v8H1zM4 4V1h8v8H9" fill="none" stroke="#333" strokeWidth="1.600" /></svg>
            </PlainButton>
            <PlainButton type="button" aria-label="Close">
              <svg width="13" height="13"><path d="m1 1 11 11M12 1 1 12" stroke="#333" strokeWidth="1.600" /></svg>
            </PlainButton>
          </WindowButtons>
        </TitleBar>
        <MenuBar>
          {menus.map((name) => <MenuLink key={name} href="#">{name}</MenuLink>)}
        </MenuBar>
        <TopBar $height={44}>
          <Tools items={mainTools} />
          <Pager>
            <ToolBtn type="button" aria-label="Previous page"><Icon name="prev" /></ToolBtn>
            <ToolBtn type="button" aria-label="Next page"><Icon name="next" /></ToolBtn>
            <PageBox id="page" defaultValue="1" />
            <label htmlFor="page">of 1</label>
          </Pager>
        </TopBar>
        <TopBar $height={37}>
          <Tools items={checkTools} />
          <ToolBtn type="button" aria-label="Close toolbar">
            <svg width="10" height="10"><path d="m1 1 8 8M9 1 1 9" stroke="#222" strokeWidth="1.600" /></svg>
          </ToolBtn>
        </TopBar>
        <Body>
          <ImportPanel />
          <Main>
            <GraphicsArea />
            <ViewBar $height={45}>
              <Tools items={["|", "meshFlat+", "|", "fModel", "fBlue", "fCard", "fGear", "fLoad", "fAxes+", "/", "erase", "cards", "moveTo", "renumber", "|"]} />
              <Combo $width={114}>
                <ComboIcon name="autoColor" />
                <select aria-label="Color mode"><option>Auto</option></select>
              </Combo>
              <Tools items={["shellWhite+", "shellBlue+", "cube", "/"]} />
              <Combo $width={124}>
                <ComboIcon name="compColor" />
                <select aria-label="Element color"><option>By Comp</option></select>
              </Combo>
              <Tools items={["wireCube+", "meshCube+", "line+", "plate+", "slab+", "quads", "monitor", "|", "star"]} />
            </ViewBar>
            <Panel>
              <Commands>
                {commands.map((column) => (
                  <CommandColumn key={column[0]}>
                    {column.map((name) => <Command key={name} type="button">{name}</Command>)}
                  </CommandColumn>
                ))}
              </Commands>
              <Pages>
                {pages.map((name) => (
                  <PageOption key={name}>
                    <input type="radio" name="page-menu" defaultChecked={name === "Geom"} />
                    {name}
                  </PageOption>
                ))}
              </Pages>
            </Panel>
          </Main>
        </Body>
        <StatusBar>
          <StatusText>Ready</StatusText>
          <StatusCell $width={114} />
          <StatusCell $width={114}>Model</StatusCell>
          <StatusCell $width={130} />
          <StatusCell $width={129} />
        </StatusBar>
        <Pointer width="16" height="22" viewBox="0 0 16 22">
          <path d="M1 1v16l4-4 3 7 3-1-3-7h5z" fill="#fff" stroke="#333" strokeWidth="1.400" />
        </Pointer>
        <EdgeWidget />
        <Recorder>
          <svg width="70" height="26" viewBox="0 0 70 26">
            <path d="M12 4v18M22 4v18" stroke="#bbb" strokeWidth="4" />
            <path d="M44 4h18v16H44z" fill="none" stroke="#bbb" strokeWidth="2.500" />
            <path d="m48 16 5-7 5 7z" fill="#ccc" />
          </svg>
        </Recorder>
      </Window>
    </Screen>
  </>
);

export default App;
